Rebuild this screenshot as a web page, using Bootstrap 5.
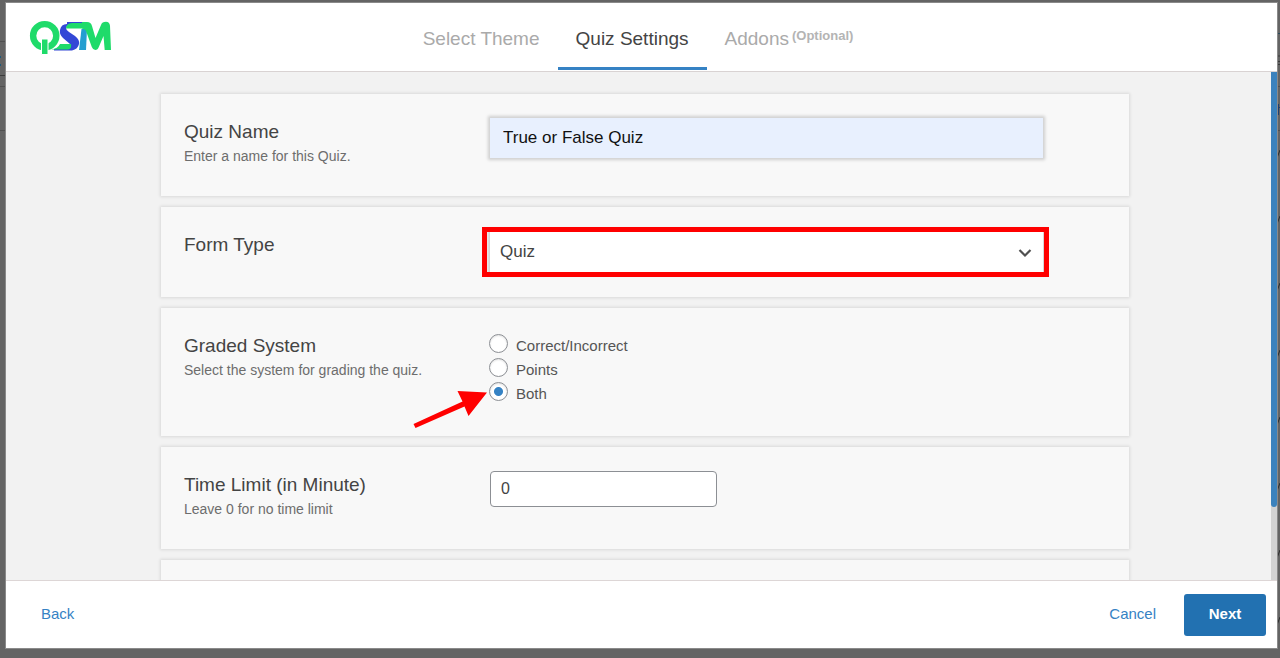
<!DOCTYPE html>
<html lang="en">
<head>
<meta charset="utf-8">
<meta name="viewport" content="width=device-width, initial-scale=1">
<title>Quiz Settings</title>
<link href="https://cdn.jsdelivr.net/npm/bootstrap@5.3.0/dist/css/bootstrap.min.css" rel="stylesheet">
<style>
  body { font-family: "Liberation Sans", Arial, sans-serif; background: #646464; color: #444; }
  .stage { padding: 3px 3px 10px 6px; }
  .page-behind { inset: 0; }
  .wizard { box-shadow: 0 0 0 1px #8a8a8a; }
  .wizard-head { height: 69px; padding: 0 30px 0 23px; border-bottom: 1px solid #d9d3d3; }
  .steps a { font-size: 19px; line-height: 28px; padding: 22px 18px 14px; color: #aaa; border-bottom: 3px solid transparent; text-decoration: none; white-space: nowrap; }
  .steps a.active { color: #444; border-bottom-color: #3582c4; }
  .steps small { font-size: 13px; font-weight: bold; line-height: 22px; margin-left: 3px; color: #b4b4b4; }
  .wizard-body { background: #f2f2f2; min-height: 0; }
  .settings { padding: 22px 142px 0 155px; gap: 11px; }
  .setting { background: #f8f8f8; box-shadow: 0 0 3px 1px rgba(0,0,0,.1); padding: 24px 23px 30px; }
  .setting-short { padding-bottom: 24px; }
  .caption { width: 306px; }
  .caption label { font-size: 19px; line-height: 28px; margin: 0; display: block; }
  .caption p { font-size: 14px; line-height: 20px; margin: 0; color: #6d6d6d; }
  .field { width: 553px; }
  .name-box { height: 40px; border: 0; border-radius: 0; background: #e8f0fe; color: #111; font-size: 17px; padding: 0 13px; box-shadow: 0 0 3px 2px rgba(0,0,0,.17); }
  .name-box:focus { background: #e8f0fe; }
  .type-box { height: 42px; border: 0; border-radius: 0; color: #444; font-size: 17px; padding: 0 32px 0 10px; box-shadow: 0 0 3px 2px rgba(0,0,0,.17);
    background: #fff url("data:image/svg+xml,%3Csvg xmlns='http://www.w3.org/2000/svg' viewBox='0 0 16 16'%3E%3Cpath d='M2.5 6 8 11.5l5.5-5.5' fill='none' stroke='%23505050' stroke-width='2.2'/%3E%3C/svg%3E") no-repeat right 10px center / 16px 16px; }
  .highlight { inset: -4px -6px -4px -8px; border: 5px solid #f00; pointer-events: none; }
  .grades { padding-top: 2px; margin-left: -1px; }
  .grade { height: 24px; }
  .grade input { width: 19px; height: 19px; margin: 0; border: 1px solid #8c8f94; background: #fff; box-shadow: inset 0 1px 2px rgba(0,0,0,.12); }
  .grade input:checked { border-color: #8c8f94; background: radial-gradient(circle, #3582c4 0 4px, #fff 5px); }
  .grade label { font-size: 15px; line-height: 24px; margin-left: 8px; color: #555; }
  .pointer { left: -76px; top: 58px; }
  .limit-box { width: 227px; height: 36px; border: 1px solid #8c8f94; border-radius: 4px; font-size: 16px; padding: 0 10px; color: #444; }
  .track { width: 6px; background: #d3d3d3; }
  .thumb { background: #3b82bd; border-radius: 0 0 3px 3px; }
  .wizard-foot { height: 68px; padding: 0 11px 0 35px; border-top: 1px solid #ddd6d6; }
  .wizard-foot a { font-size: 15px; color: #3582c4; text-decoration: none; }
  .next-btn, .next-btn:hover { width: 82px; height: 42px; margin-left: 28px; background: #2271b1; color: #fff; border: 0; border-radius: 3px; font-size: 15px; font-weight: bold; padding: 0; }
</style>
</head>
<body>
<div class="stage vh-100 position-relative overflow-hidden">
  <!-- slivers of the dimmed admin page on both sides of the dialog -->
  <div class="page-behind position-absolute d-flex justify-content-between" aria-hidden="true">
    <svg width="6" height="658"><path d="M0 41.5h6M0 86.5h6M0 130.5h6" stroke="#505050"/><path d="M0 75.5h6" stroke="#3c3c3c"/><path d="M0 57h1M0 65h1" stroke="#1b5a7c" stroke-width="2"/></svg>
    <svg width="3" height="658"><path d="M0 33.5h3" stroke="#29495a"/><path d="M0 86.5h3M0 130.5h3" stroke="#505050"/><path d="M0 61.5h3M1 56h2M1 64.5h2" stroke="#3a3a3a"/><path d="M1.5 104v11M0 107.5h3" stroke="#1f3f70"/><path d="M0 158l3-8M0 224l3-8M0 291l3-8M0 358l3-8M0 425l3-8M0 491l3-8M0 558l3-8M0 625l3-8" stroke="#2c2c2c"/></svg>
  </div>

  <div class="wizard position-relative bg-white h-100 d-flex flex-column">
    <header class="wizard-head d-flex align-items-center flex-shrink-0">
      <div class="flex-fill w-25">
        <svg class="d-block" width="83" height="36" viewBox="29 20 83 36" role="img" aria-label="QSM">
          <circle cx="44.7" cy="36.7" r="11.6" fill="none" stroke="#1fdb6a" stroke-width="6.4"/>
          <path d="M67 23H85V25H70q-3 1-4 4 0 2 3 4l6 4q5 4 4 8-1 5-7 6.500H54v-1.500h14q3-2 2-5l-7-6q-4-4-3-8 1-6 7-6z" fill="#3347d6"/>
          <path d="M66 29.500q0-5 6-5.500h14v5.500z" fill="#1fdb6a"/>
          <path d="M51 50.500q7-1 9-5.500h11q1 5-3 5.500z" fill="#1fdb6a"/>
          <path d="M81.500 30h5.500l-1 21h-7z" fill="#259ed0"/>
          <path d="M82 23h5q4 0 5 4l3.500 12L101 26q1-3.200 5-3.200 3.500 0 4 4L111 51h-6.300l-1.200-14-4.700 11q-1 3-3.500 3-2.300 0-3.500-3L86 32q-1-2.500-4-2.500z" fill="#1fdb6a"/>
          <path d="M41.500 40H48v15.500h-6.500z" fill="#1fdb6a" stroke="#fff"/>
        </svg>
      </div>
      <nav class="steps d-flex align-self-start">
        <a href="#theme">Select Theme</a>
        <a href="#settings" class="active" aria-current="step">Quiz Settings</a>
        <a href="#addons" class="d-flex">Addons <small>(Optional)</small></a>
      </nav>
      <div class="flex-fill w-25"></div>
    </header>

    <div class="wizard-body d-flex flex-fill overflow-hidden">
      <form class="settings d-flex flex-column flex-fill">
        <section class="setting d-flex flex-shrink-0">
          <div class="caption flex-shrink-0">
            <label for="quizName">Quiz Name</label>
            <p>Enter a name for this Quiz.</p>
          </div>
          <div class="field"><input id="quizName" type="text" class="name-box form-control" value="True or False Quiz"></div>
        </section>

        <section class="setting setting-short d-flex flex-shrink-0">
          <div class="caption flex-shrink-0"><label for="formType">Form Type</label></div>
          <div class="field position-relative">
            <select id="formType" class="type-box form-select">
              <option selected>Quiz</option>
              <option>Survey</option>
            </select>
            <div class="highlight position-absolute"></div>
          </div>
        </section>

        <section class="setting d-flex flex-shrink-0" role="radiogroup" aria-labelledby="gradedTitle">
          <div class="caption flex-shrink-0">
            <label id="gradedTitle" for="gradeBoth">Graded System</label>
            <p>Select the system for grading the quiz.</p>
          </div>
          <div class="grades position-relative">
            <div class="grade d-flex"><input class="form-check-input" type="radio" name="grade" id="gradeCorrect"><label for="gradeCorrect">Correct/Incorrect</label></div>
            <div class="grade d-flex"><input class="form-check-input" type="radio" name="grade" id="gradePoints"><label for="gradePoints">Points</label></div>
            <div class="grade d-flex"><input class="form-check-input" type="radio" name="grade" id="gradeBoth" checked><label for="gradeBoth">Both</label></div>
            <svg class="pointer position-absolute" width="76" height="38" viewBox="413 391 76 38" aria-hidden="true"><path d="M413.500 425l49-22.500-5-10.500 29.500 1.500-18.500 23.500-4-9.500L415.500 429z" fill="#f00"/></svg>
          </div>
        </section>

        <section class="setting d-flex flex-shrink-0">
          <div class="caption flex-shrink-0">
            <label for="timeLimit">Time Limit (in Minute)</label>
            <p>Leave 0 for no time limit</p>
          </div>
          <div><input id="timeLimit" type="text" inputmode="numeric" class="limit-box form-control" value="0"></div>
        </section>

        <section class="setting flex-shrink-0"></section>
      </form>
      <div class="track flex-shrink-0"><div class="thumb" style="height: 85.6%"></div></div>
    </div>

    <footer class="wizard-foot d-flex align-items-center flex-shrink-0">
      <a href="#back" class="me-auto">Back</a>
      <a href="#cancel">Cancel</a>
      <button type="button" class="next-btn btn">Next</button>
    </footer>
  </div>
</div>
<script src="https://cdn.jsdelivr.net/npm/bootstrap@5.3.0/dist/js/bootstrap.bundle.min.js"></script>
</body>
</html>
